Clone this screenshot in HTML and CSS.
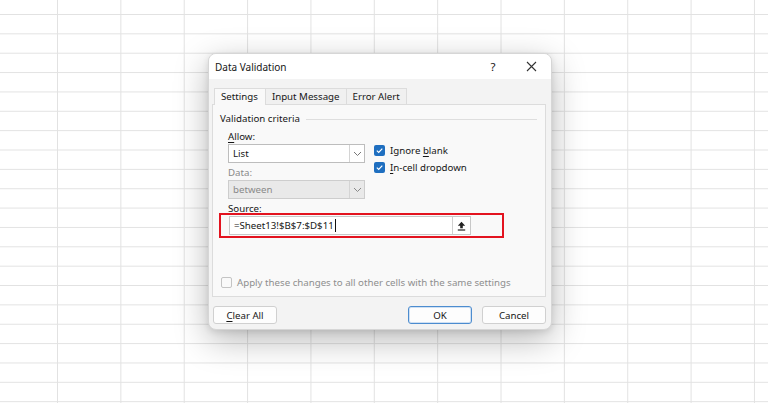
FILE: index.html
```html
<!DOCTYPE html>
<html lang="en">

<head>
    <meta charset="UTF-8">
    <meta name="viewport" content="width=device-width, initial-scale=1.0">
    <title>Data Validation</title>
    <link rel="stylesheet" href="styles.css">
</head>

<body>
    <div class="dialog">
        <div class="title_bar">
            <span class="title">Data Validation</span>
            <span class="title_btn help">?</span>
            <span class="title_btn close">
                <svg width="11" height="11" viewBox="0 0 11 11">
                    <path d="M1 1 L10 10 M10 1 L1 10" stroke="#333" stroke-width="1.1" />
                </svg>
            </span>
        </div>

        <div class="dialog_body">
            <div class="tabs">
                <div class="tab active">Settings</div>
                <div class="tab">Input Message</div>
                <div class="tab">Error Alert</div>
            </div>

            <div class="panel">
                <div class="group_title">
                    <span>Validation criteria</span>
                    <div class="rule"></div>
                </div>

                <div class="criteria">
                    <div class="criteria_left">
                        <label class="field_label allow_label"><u>A</u>llow:</label>
                        <div class="select">
                            <span class="select_value">List</span>
                            <span class="select_arrow">
                                <svg width="9" height="6" viewBox="0 0 9 6">
                                    <path d="M1 1 L4.5 4.5 L8 1" fill="none" stroke="#777" stroke-width="1" />
                                </svg>
                            </span>
                        </div>

                        <label class="field_label disabled">Data:</label>
                        <div class="select is_disabled">
                            <span class="select_value">between</span>
                            <span class="select_arrow">
                                <svg width="9" height="6" viewBox="0 0 9 6">
                                    <path d="M1 1 L4.5 4.5 L8 1" fill="none" stroke="#888" stroke-width="1" />
                                </svg>
                            </span>
                        </div>
                    </div>

                    <div class="criteria_right">
                        <div class="check_row">
                            <span class="checkbox checked">
                                <svg width="9" height="9" viewBox="0 0 9 9">
                                    <path d="M1.8 4.6 L3.7 6.4 L7.3 2.6" fill="none" stroke="#fff" stroke-width="1.2" />
                                </svg>
                            </span>
                            <span>Ignore <u>b</u>lank</span>
                        </div>
                        <div class="check_row">
                            <span class="checkbox checked">
                                <svg width="9" height="9" viewBox="0 0 9 9">
                                    <path d="M1.8 4.6 L3.7 6.4 L7.3 2.6" fill="none" stroke="#fff" stroke-width="1.2" />
                                </svg>
                            </span>
                            <span><u>I</u>n-cell dropdown</span>
                        </div>
                    </div>
                </div>

                <label class="field_label source_label">Source:</label>
                <div class="highlight">
                    <div class="source_input">
                        <span class="source_text">=Sheet13!$B$7:$D$11</span><span class="caret"></span>
                        <span class="collapse_btn">
                            <svg width="9" height="10" viewBox="0 0 9 10">
                                <path d="M4.5 0.8 L8.2 4.8 L5.8 4.8 L5.8 7.2 L3.2 7.2 L3.2 4.8 L0.8 4.8 Z" fill="#222" />
                                <rect x="0.8" y="8.4" width="7.4" height="1.2" fill="#222" />
                            </svg>
                        </span>
                    </div>
                </div>

                <div class="apply_row">
                    <span class="checkbox empty"></span>
                    <span>Apply these changes to all other cells with the same settings</span>
                </div>
            </div>

            <div class="buttons">
                <button class="btn"><u>C</u>lear All</button>
                <div class="btn_group">
                    <button class="btn primary">OK</button>
                    <button class="btn">Cancel</button>
                </div>
            </div>
        </div>
    </div>
</body>

</html>
```

FILE: styles.css
```css
* {
    margin: 0;
    padding: 0;
    box-sizing: border-box;
}

body {
    width: 768px;
    height: 403px;
    overflow: hidden;
    padding: 53px 0 0 208px;
    font-family: "Noto Sans", "Open Sans", sans-serif;
    font-size: 9.7px;
    color: #161616;
    background-color: #fff;
    /* spreadsheet cell grid */
    background-image:
        linear-gradient(to right, #e2e2e2 1px, transparent 1px),
        linear-gradient(to bottom, #e2e2e2 1px, transparent 1px);
    background-size: 63.36px 19.37px;
    background-position: 57px 14px;
}

u {
    text-decoration-thickness: 1px;
    text-underline-offset: 2px;
}

.dialog {
    width: 344px;
    height: 277px;
    border-radius: 8px;
    background: #f3f3f3;
    border: 1px solid #d6d6d6;
    box-shadow: 0 10px 34px rgba(0, 0, 0, 0.28), 0 2px 6px rgba(0, 0, 0, 0.1);
    overflow: hidden;
    display: flex;
    flex-direction: column;
}

.title_bar {
    height: 25px;
    background: #fff;
    display: flex;
    align-items: center;
    padding-left: 6px;
}

.title {
    flex: 1;
    font-size: 10px;
}

.title_btn {
    width: 40px;
    display: flex;
    justify-content: center;
    align-items: center;
}

.help {
    font-size: 11.5px;
}

.close {
    width: 36px;
    margin-right: 2px;
}

.dialog_body {
    flex: 1;
    padding: 9px 5px 0 3px;
    display: flex;
    flex-direction: column;
}

.tabs {
    display: flex;
    height: 16px;
    padding-left: 2px;
}

.tab {
    padding: 0 6px;
    line-height: 15px;
    border: 1px solid #dcdcdc;
    border-bottom: none;
    background: #f0f0f0;
    margin-left: -1px;
}

.tab.active {
    background: #f9f9f9;
    padding: 0 7px 0 6px;
    height: 17px;
    position: relative;
    z-index: 1;
    margin-left: 0;
}

.panel {
    height: 193px;
    background: #f9f9f9;
    border: 1px solid #dcdcdc;
    padding: 7px 8px 0 7px;
}

.group_title {
    display: flex;
    align-items: center;
    gap: 6px;
    line-height: 14px;
}

.rule {
    flex: 1;
    height: 1px;
    background: #dedede;
}

.criteria {
    display: flex;
    padding-left: 8px;
}

.criteria_left {
    width: 137px;
}

.field_label {
    display: block;
    line-height: 13px;
    margin-top: 3px;
}

.allow_label {
    margin-top: 4px;
}

.field_label.disabled {
    color: #8a8a8a;
}

.select {
    height: 19px;
    margin-top: 1px;
    background: #fff;
    border: 1px solid #bdbdbd;
    display: flex;
    align-items: center;
}

.select_value {
    flex: 1;
    padding-left: 4px;
}

.select_arrow {
    width: 15px;
    height: 100%;
    border-left: 1px solid #d4d4d4;
    display: flex;
    justify-content: center;
    align-items: center;
}

.select.is_disabled {
    background: #e9e9e9;
    border-color: #cdcdcd;
    color: #8a8a8a;
}

.criteria_right {
    padding: 19px 0 0 9px;
    display: flex;
    flex-direction: column;
    gap: 6px;
}

.check_row {
    display: flex;
    align-items: center;
    gap: 5px;
    line-height: 11px;
}

.checkbox {
    width: 11px;
    height: 11px;
    border-radius: 2px;
    display: flex;
    justify-content: center;
    align-items: center;
}

.checkbox.checked {
    background: #1f6fc0;
}

.checkbox.empty {
    border: 1px solid #c4c4c4;
    background: #f9f9f9;
}

.source_label {
    padding-left: 8px;
    margin-top: 3px;
}

.highlight {
    width: 285px;
    height: 25px;
    margin: -2px 0 0 -1px;
    border: 2px solid #e3131f;
    padding: 1px 0 0 8px;
    position: relative;
}

.source_input {
    width: 242px;
    height: 19px;
    background: #fff;
    border: 1px solid #c8c8c8;
    display: flex;
    align-items: center;
    padding-left: 4px;
}

.caret {
    width: 1px;
    height: 13px;
    background: #111;
    margin-left: 1px;
}

.collapse_btn {
    margin-left: auto;
    width: 18px;
    height: 100%;
    border-left: 1px solid #d0d0d0;
    display: flex;
    justify-content: center;
    align-items: center;
}

.apply_row {
    margin-top: 39px;
    display: flex;
    align-items: center;
    gap: 5px;
    line-height: 11px;
    color: #8e8e8e;
    padding-left: 1px;
}

.buttons {
    display: flex;
    justify-content: space-between;
    margin-top: 9px;
    padding-left: 1px;
}

.btn_group {
    display: flex;
    gap: 10px;
}

.btn {
    width: 64px;
    height: 18px;
    font-family: inherit;
    font-size: 9.7px;
    color: #161616;
    background: #fdfdfd;
    border: 1px solid #d0d0d0;
    border-radius: 3px;
}

.btn.primary {
    border: 1px solid #4c8ccf;
    box-shadow: inset 0 0 0 1px #cfe0f3;
}
```
